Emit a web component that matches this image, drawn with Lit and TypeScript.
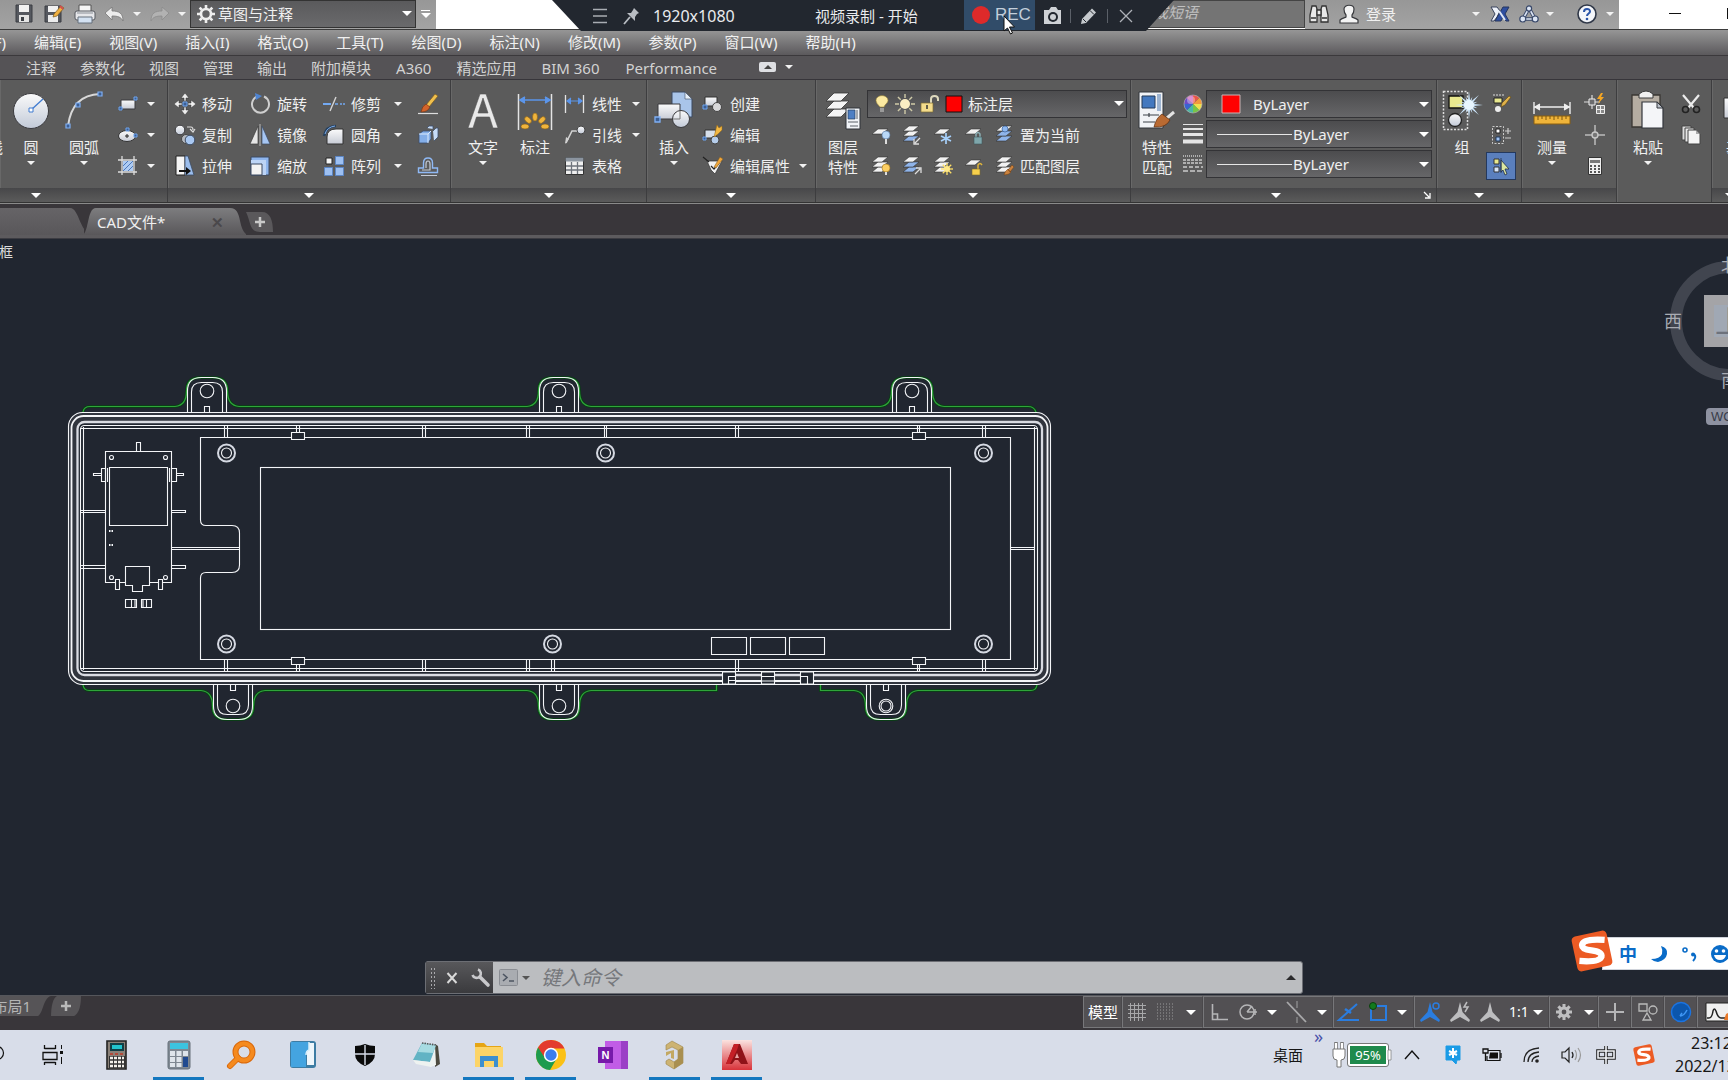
import { LitElement, html, svg, css, TemplateResult } from "lit";
import { customElement } from "lit/decorators.js";
import { classMap } from "lit/directives/class-map.js";

const ic = (w: number, h: number, body: unknown): TemplateResult =>
  html`<svg class="ic" width=${w} height=${h} viewBox="0 0 ${w} ${h}" aria-hidden="true">${body}</svg>`;

const caret = html`<span class="caret"></span>`;

/* Shared shapes */
const sheet = (x: number, y: number, fill = "#f2f2f2") =>
  svg`<path d="M${x + 6} ${y}h10l-6 5h-10z" fill=${fill} stroke="#333" stroke-width=".6"/>`;
const stack = (blue: number) =>
  svg`${[2, 1, 0].map((i) => sheet(1, 1 + i * 5, i >= 3 - blue ? "#8fb4ea" : "#f2f2f2"))}`;

/* Title bar icons */
const I = {
  save: ic(20, 20, svg`<path d="M2 1h16v17H2z" fill="#55585f" stroke="#3b3d42"/><path d="M5 1h10v7H5z" fill="#f1f1f1"/><path d="M5 11h10v7H5z" fill="#e4e4e4"/><path d="M7 13h3v4H7z" fill="#3d4046"/>`),
  saveAs: ic(20, 20, svg`<path d="M1 2h16v16H1z" fill="#55585f" stroke="#3b3d42"/><path d="M4 2h10v6H4z" fill="#f1f1f1"/><path d="M4 11h10v7H4z" fill="#ececec"/><path d="M9 13l1-3 7-8 3 2-7 8z" fill="#f0b040" stroke="#7a5a20" stroke-width=".7"/><path d="M16 2l3 3" stroke="#d05050" stroke-width="2"/>`),
  print: ic(22, 20, svg`<path d="M5 1h12v7H5z" fill="#f5f5f5" stroke="#555"/><rect x="1" y="7" width="20" height="9" rx="2" fill="#e6e7ea" stroke="#55585f"/><path d="M4 13h14v6H4z" fill="#d4e2f2" stroke="#66707c"/><path d="M3 9h16" stroke="#8b9097"/>`),
  undo: ic(20, 16, svg`<path d="M1 7l7-6v4c7 0 11 2 11 10-2-4-5-5-11-5v4z" fill="#ececec" stroke="#777" stroke-width=".8"/>`),
  redo: ic(20, 16, svg`<path d="M19 7l-7-6v4C5 5 1 7 1 15c2-4 5-5 11-5v4z" fill="#b2b2b2" stroke="#8b8b8b" stroke-width=".8"/>`),
  gear: ic(18, 18, svg`<circle cx="9" cy="9" r="5" fill="none" stroke="#eee" stroke-width="2.6"/><g stroke="#eee" stroke-width="2.6">${[0, 45, 90, 135].map((a) => svg`<path d="M9 0v3M9 15v3" transform="rotate(${a} 9 9)"/>`)}</g>`),
  binoculars: ic(20, 20, svg`<g fill="#e8e8e8" stroke="#333" stroke-width="1.3"><path d="M3 2h4l1 3v13H1v-7z"/><path d="M13 2h4l2 9v7h-7V5z"/><path d="M8 6h4v5H8z"/><path d="M2 14h5M13 14h5"/></g>`),
  user: ic(20, 20, svg`<path d="M1 19v-3c2-2 5-2 6-3v-2C5 9 5 7 5 5c0-5 10-5 10 0 0 2 0 4-2 6v2c1 1 4 1 6 3v3z" fill="#f3f3f3" stroke="#38393d" stroke-width="1.2"/>`),
  exchange: ic(20, 16, svg`<path d="M1 1h6l3 4-3 6-3 4H1l4-7z" fill="#eef2fa" stroke="#39435c"/><path d="M19 1h-6L5 15h6l2-4 3 4h3l-4-7z" fill="#2f4fa0" stroke="#26365f"/><path d="M9 5l6 9" stroke="#dfe7f6" stroke-width="2"/>`),
  a360: ic(20, 18, svg`<path d="M10 3L4 14h12z" fill="none" stroke="#38486a" stroke-width="3.600" stroke-linejoin="round"/><path d="M10 3L4 14h12z" fill="none" stroke="#dce5f4" stroke-width="1.600" stroke-linejoin="round"/><g fill="#dce5f4" stroke="#38486a" stroke-width="1.200"><circle cx="10" cy="3.500" r="2.600"/><circle cx="3.800" cy="14" r="3"/><circle cx="16.200" cy="14" r="3"/></g>`),
  help: ic(20, 20, svg`<circle cx="10" cy="10" r="9" fill="#f4f6fa" stroke="#303848" stroke-width="1.6"/><path d="M7 8c0-4 6-4 6-.5 0 2-3 2-3 4.500" fill="none" stroke="#2b55a8" stroke-width="2"/><circle cx="10" cy="15" r="1.300" fill="#2b55a8"/>`),
  burger: ic(14, 16, svg`<path d="M0 1.500h14M0 8h14M0 14.500h14" stroke="#a9adb3" stroke-width="1.500"/>`),
  pin: ic(16, 18, svg`<path d="M10 1l5 5-2 1-2 3 0 4-8-8 4 0 2-3z" fill="#b9bdc3"/><path d="M6 10l-6 7" stroke="#b9bdc3" stroke-width="1.800"/>`),
  camera: ic(20, 18, svg`<path d="M2 3h4l2-3h5l2 3h3v14H1V3z" fill="#cfd2d6"/><circle cx="10" cy="10" r="5" fill="#22272f"/><circle cx="10" cy="10" r="3" fill="#cfd2d6"/>`),
  pencil: ic(18, 18, svg`<path d="M1 17l1-5L12 1.500l4 4L6 16z" fill="#c6cace"/><path d="M10 3.500l4 4M3 12l3 3" stroke="#22272f"/>`),
  close: ic(14, 14, svg`<path d="M1 1l12 12M13 1L1 13" stroke="#aeb2b8" stroke-width="1.300"/>`),
  pointer: ic(12, 20, svg`<path d="M1 1v15l3.500-3 3 6 2-1-3-6h5z" fill="#fff" stroke="#111"/>`),

  /* Ribbon: draw */
  circle: ic(38, 38, svg`<circle cx="19" cy="19" r="17.500" fill="url(#ball)" stroke="#3a3a3e"/><path d="M19 18L31 7" stroke="#3f7bd0" stroke-width="1.300"/><path d="M17 16h4v4h-4z" fill="#fff" stroke="#3f7bd0"/>`),
  arc: ic(40, 42, svg`<path d="M4 36Q8 5 36 4" fill="none" stroke="#d8d8d8" stroke-width="2"/><g fill="#3d5f93" stroke="#7fb0f5" stroke-width="1.200"><path d="M2 34h4v4H2zM12 13h4v4h-4zM34 2h4v4h-4z"/></g>`),
  rect: ic(20, 16, svg`<path d="M3 4h14v9H3z" fill="url(#plate)" stroke="#3a3a3e"/><path d="M1 11h3v3H1zM16 1h3v3h-3z" fill="#3d5f93" stroke="#6fa5ef"/>`),
  ellipse: ic(20, 16, svg`<ellipse cx="9" cy="9" rx="8.500" ry="5.500" fill="url(#plate)" stroke="#333"/><path d="M9 7v4M7 9h4" stroke="#222"/><path d="M8 1h3v3H8zM16 7h3v3h-3z" fill="#3d5f93" stroke="#6fa5ef"/>`),
  hatch: ic(20, 20, svg`<path d="M5 5h10v10H5z" fill="#aecbf2"/><path d="M5 10l5-5M5 15L15 5M10 15l5-5" stroke="#4b78bb"/><path d="M4 0v19M0 4h19M16 0v19M0 16h19" stroke="#dedede" stroke-width="1.300"/>`),
  /* Ribbon: modify */
  move: ic(22, 22, svg`<path d="M11 0l4 5h-3v3h-2V5H7zM11 22l4-5h-3v-3h-2v3H7zM0 11l5-4v3h3v2H5v3zM22 11l-5-4v3h-3v2h3v3z" fill="#eee" stroke="#333" stroke-width=".5"/><path d="M9 9h4v4H9z" fill="#3d5f93" stroke="#6fa5ef"/>`),
  copy: ic(22, 22, svg`<circle cx="6" cy="6" r="4.800" fill="url(#ball)" stroke="#3a3a3e"/><circle cx="12" cy="15" r="4.500" fill="#b5b9c0" stroke="#444"/><circle cx="16" cy="16" r="4.800" fill="#a9c8f2" stroke="#3c4b63"/><path d="M13 3h4q2 0 2 3M16 5l3 3 2-3" fill="none" stroke="#ddd" stroke-width="1.200"/>`),
  stretch: ic(22, 22, svg`<path d="M2 1h9v19H2z" fill="#f5f5f5" stroke="#222"/><path d="M11 1h3l6 19h-9z" fill="#9bbdec" stroke="#3a4a62" stroke-width=".8"/><path d="M5 15h7v-3l5 4-5 4v-3H5z" fill="#111"/>`),
  rotate: ic(22, 22, svg`<path d="M15 3.500a8.500 8.500 0 1 1-7 0" fill="none" stroke="#cfcfcf" stroke-width="2"/><path d="M6 0l7 3-6 4z" fill="#4f85d3"/>`),
  mirror: ic(22, 22, svg`<path d="M9 2v18H1z" fill="#e6e6e6" stroke="#3c3c3c" stroke-width=".7"/><path d="M13 2v18h8z" fill="#a6c6f3" stroke="#3c4b63" stroke-width=".7"/><path d="M11 0v22" stroke="#bbb"/>`),
  scale: ic(22, 22, svg`<path d="M2 2h18v18H2z" fill="#8fb6ee" stroke="#3c4b63"/><path d="M2 5h15v15H2z" fill="#bcd4f6"/><path d="M2 9h11v11H2z" fill="#f3f3f3" stroke="#3c4b63"/>`),
  trim: ic(22, 20, svg`<path d="M0 10h8" stroke="#73a9f2" stroke-width="2"/><path d="M7 17l6-14" stroke="#d6d6d6" stroke-width="1.400"/><path d="M12 10h3m2 0h2m1 0h2" stroke="#73a9f2" stroke-width="1.500"/>`),
  fillet: ic(22, 22, svg`<path d="M4 20V13q0-8 9-8h7v15z" fill="url(#plate)" stroke="#333"/><path d="M1 12Q3 2 13 2" fill="none" stroke="#27415f" stroke-width="2.500"/><path d="M2 10Q4 3 12 2" fill="none" stroke="#80aeea" stroke-width="1"/>`),
  array: ic(22, 22, svg`<path d="M3 3h6v6H3z" fill="#f5f5f5" stroke="#222"/><g fill="#9dc0f2" stroke="#5c86c4"><path d="M12.500 1.500h8v8h-8zM1.500 12.500h8v8h-8zM12.500 12.500h8v8h-8z"/></g>`),
  brush: ic(22, 22, svg`<path d="M18 1l3 2-9 11-3-2z" fill="#f1c04d" stroke="#7b5b20" stroke-width=".7"/><path d="M9 11l4 3q-2 5-9 5 1-6 5-8z" fill="#d3632a" stroke="#6f3110" stroke-width=".6"/><path d="M1 20.500h20" stroke="#ddd" stroke-width="1.200"/>`),
  explode: ic(22, 22, svg`<path d="M2 10l4-3h8v8l-3 4H2z" fill="#84aee8" stroke="#3b4d69" stroke-width=".8"/><path d="M2 10h9v9M11 10l3-3" fill="none" stroke="#dceafc"/><path d="M10 4l2-2h4v3M16 7l3-3h2v9l-4 4" fill="#c5dbf7" stroke="#3b4d69" stroke-width=".8"/>`),
  offset: ic(22, 22, svg`<path d="M1.500 17.500h19V13h-5V8q0-5-4.500-5T6.500 8v5h-5z" fill="none" stroke="#8fb9f5" stroke-width="1.400"/><path d="M4 20.500h16M9 13V9q0-3 2-3t2 3v6H5" fill="none" stroke="#c4cbd6" stroke-width="1.200"/>`),
  /* Ribbon: annotate */
  letterA: ic(34, 38, svg`<path d="M2 36L14 2h6l12 34h-5l-3.500-11h-13L7 36zM12 21h10L17 6z" fill="#e9e9e9" stroke="#555" stroke-width=".6"/>`),
  dimension: ic(38, 40, svg`<path d="M2.500 3v36M35.500 3v36" stroke="#e4e4e4" stroke-width="1.500"/><path d="M4 9h30M9 6L4 9l5 3M29 6l5 3-5 3" fill="#5b95ea" stroke="#5b95ea" stroke-width="1.600"/><g fill="#f0b43c" stroke="#8a6116" stroke-width=".6"><ellipse cx="19" cy="26" rx="2.500" ry="4"/><ellipse cx="12" cy="29" rx="2.500" ry="4" transform="rotate(-45 12 29)"/><ellipse cx="26" cy="29" rx="2.500" ry="4" transform="rotate(45 26 29)"/><ellipse cx="9" cy="35.500" rx="4" ry="2.500"/><ellipse cx="29" cy="35.500" rx="4" ry="2.500"/></g>`),
  linear: ic(22, 20, svg`<path d="M1.500 1v18M19.500 1v18" stroke="#e4e4e4" stroke-width="1.300"/><path d="M3 7h15M7 4L3 7l4 3M14 4l4 3-4 3" fill="#5b95ea" stroke="#5b95ea" stroke-width="1.200"/>`),
  leader: ic(22, 20, svg`<path d="M2 18L8 6h7" fill="none" stroke="#d2d2d2" stroke-width="1.600"/><path d="M1 19l1-7 3 2z" fill="#d2d2d2"/><circle cx="17" cy="5" r="4" fill="url(#ball)" stroke="#444"/>`),
  table: ic(22, 20, svg`<path d="M1.500 1.500h18v17h-18z" fill="#efefef" stroke="#333"/><path d="M1.500 1.500h18v4h-18z" fill="#8b949f"/><path d="M2 10h17M2 14h17M7.500 6v12M13.500 6v12" stroke="#6d737b" stroke-width="1.300"/>`),
  /* Ribbon: block */
  insert: ic(40, 40, svg`<path d="M18 1h13l7 7v18H18z" fill="#a9c5ea" stroke="#3c4b63"/><path d="M31 1v7h7z" fill="#e6effa" stroke="#3c4b63" stroke-width=".6"/><path d="M4 13h22v15H4z" fill="url(#plate)" stroke="#3a3a3e"/><circle cx="27" cy="28" r="8.500" fill="url(#ball)" stroke="#3a3a3e"/><path d="M26 20v8h-7" fill="none" stroke="#777"/><path d="M1 26h5v5H1z" fill="#3d5f93" stroke="#7fb0f5" stroke-width="1.300"/>`),
  create: ic(22, 20, svg`<path d="M3 3h12v9H3z" fill="url(#plate)" stroke="#333"/><circle cx="15" cy="13" r="4.500" fill="#d8d8da" stroke="#444"/><path d="M1 11h4v4H1z" fill="#3d5f93" stroke="#6fa5ef"/>`),
  blockEdit: ic(22, 22, svg`<path d="M3 6h11v8H3z" fill="#d6dfea" stroke="#333"/><circle cx="13" cy="16" r="4" fill="#b5cdeb" stroke="#444"/><path d="M1 13h3v3H1z" fill="#3d5f93" stroke="#6fa5ef"/><path d="M14 5l1-4 2 3 3-2v4l-4 4-4 3z" fill="#f3b944" stroke="#9b6b12" stroke-width=".5"/>`),
  attr: ic(22, 20, svg`<path d="M5 5h15l-7 13-4-4z" fill="#f2f2f2" stroke="#333" stroke-width=".7"/><path d="M1 1l6 5M9 10l3 3 5-6" fill="none" stroke="#222" stroke-width="1.200"/><path d="M18 1l3 2-7 9-2-1z" fill="#f0a53a" stroke="#7b5b20" stroke-width=".5"/>`),
  /* Ribbon: layers */
  layerProps: ic(38, 40, svg`${[18, 10, 2].map((y) => svg`<path d="M10 ${y}h15l-8 8H2z" fill="#f4f4f4" stroke="#333" stroke-width=".8"/>`)}<path d="M22 17h14v21H22z" fill="#f1f4f8" stroke="#2f3339"/><path d="M24 19h7v9h-7z" fill="#4d7fc4" stroke="#27415f" stroke-width=".7"/><path d="M33 19v9M24 31h10M26 35h8" stroke="#5a6068"/>`),
  bulb: ic(16, 20, svg`<path d="M6 13Q2 9 2 6.500C2 0 14 0 14 6.500 14 9 11 10 10 13z" fill="#fbe9a1" stroke="#a08a3c" stroke-width=".6"/><path d="M6 14h4v4H6z" fill="#9a9a9a"/>`),
  sun: ic(20, 20, svg`<g stroke="#cfcaa8" stroke-width="1.400">${[0, 45, 90, 135].map((a) => svg`<path d="M10 0v4M10 16v4" transform="rotate(${a} 10 10)"/>`)}</g><circle cx="10" cy="10" r="5" fill="#fbeec4"/>`),
  unlock: ic(20, 18, svg`<path d="M11 8V4q0-3 3.500-3T18 4v2" fill="none" stroke="#ded9bd" stroke-width="2"/><path d="M1 8h12v9H1z" fill="#f4dc8c" stroke="#7b6a31" stroke-width=".7"/><path d="M7 10v4" stroke="#333" stroke-width="1.500"/>`),
  red: ic(18, 18, svg`<path d="M1 1h16v16H1z" fill="#f00" stroke="#111"/>`),
  l1: ic(20, 20, svg`${sheet(1, 4)}<circle cx="15" cy="10" r="4" fill="#b9d8f7" stroke="#5b7ba5" stroke-width=".6"/><path d="M15 14v5" stroke="#ddd" stroke-width="2"/>`),
  l2: ic(20, 20, svg`${stack(1)}<path d="M18 13l-5 5M12 14v5h5" fill="none" stroke="#ddd" stroke-width="1.300"/>`),
  l3: ic(20, 20, svg`${sheet(1, 4)}<path d="M13 8v11M8 11l10 5M18 11L8 16" stroke="#a6d0fb" stroke-width="1.700"/>`),
  l4: ic(20, 20, svg`${sheet(1, 4)}<path d="M12 12V9q2-3 4 0v3" fill="none" stroke="#8fb3b8" stroke-width="1.400"/><path d="M10 12h8v7h-8z" fill="#7ea6ab" stroke="#41575a" stroke-width=".6"/>`),
  l5: ic(20, 20, svg`${stack(2)}<circle cx="10" cy="4" r="3" fill="#8fb9f2" stroke="#365d96" stroke-width=".7"/>`),
  l6: ic(20, 20, svg`${stack(0)}<circle cx="15" cy="12" r="4" fill="#fccf63" stroke="#a1751c" stroke-width=".6"/><path d="M15 16v3" stroke="#ddd" stroke-width="2"/>`),
  l7: ic(20, 20, svg`${stack(2)}<path d="M13 18l5-5M14 12h5v5" fill="none" stroke="#ddd" stroke-width="1.300"/>`),
  l8: ic(20, 20, svg`${stack(0)}<g stroke="#ffe066" stroke-width="1.300">${[0, 45, 90, 135].map((a) => svg`<path d="M14 7v12" transform="rotate(${a} 14 13)"/>`)}</g><circle cx="14" cy="13" r="3" fill="#ffe98a"/>`),
  l9: ic(20, 20, svg`${sheet(1, 4)}<path d="M14 13V9q2-3 4 0" fill="none" stroke="#e0b53a" stroke-width="1.500"/><path d="M8 13h8v6H8z" fill="#f6cf4c" stroke="#7b6a31" stroke-width=".6"/>`),
  l10: ic(20, 20, svg`${stack(0)}<path d="M17 9l2 2-4 5-2-2zM13 13l3 3q-2 3-7 3 1-4 4-6z" fill="#c9823f" stroke="#6f3c10" stroke-width=".5"/>`),
  /* Ribbon: properties */
  match: ic(40, 40, svg`<path d="M2 1h24v36H2z" fill="#f1f3f6" stroke="#33373c"/><path d="M5 5h13v12H5z" fill="#4378bf" stroke="#243a58"/><path d="M20 3h4v17h-4z" fill="#9db4d1"/><path d="M6 24h16M6 31h12M12 22v4" stroke="#3d4248" stroke-width="1.200"/><path d="M37 21l-7 6" stroke="#e3e3e3" stroke-width="3"/><path d="M25 23l8 6q-4 8-16 7 2-9 8-13z" fill="#b96a32" stroke="#5c2d0e" stroke-width=".7"/>`),
  wheel: ic(20, 20, svg`${["#e8564a", "#f39a3d", "#efe04e", "#77c648", "#4cb7a5", "#3a63d0", "#6d4bc7", "#c857b6"].map((c, i) => svg`<path d="M10 10V1A9 9 0 0 1 16.400 3.600z" fill=${c} transform="rotate(${i * 45} 10 10)"/>`)}<circle cx="10" cy="10" r="9" fill="none" stroke="#bbb" stroke-width=".6"/><circle cx="8" cy="6" r="4" fill="#fff" opacity=".35"/>`),
  weights: ic(20, 20, svg`<path d="M0 .500h20" stroke="#e4e4e4"/><path d="M0 5h20" stroke="#e4e4e4" stroke-width="2"/><path d="M0 10.500h20" stroke="#e4e4e4" stroke-width="3"/><path d="M0 17.500h20" stroke="#e4e4e4" stroke-width="4"/>`),
  types: ic(20, 20, svg`<g stroke="#ccc" stroke-width="1.300"><path d="M0 2h20" stroke-dasharray="1 1"/><path d="M0 6h20M0 9h20" stroke-dasharray="3 1"/><path d="M0 13h20" stroke-dasharray="4 2"/><path d="M0 17h20" stroke-dasharray="5 2"/></g>`),
  redFrame: ic(20, 20, svg`<path d="M1 1h18v18H1z" fill="#f00" stroke="#c9b4b4"/>`),
  /* Ribbon: group, utilities, clipboard */
  group: ic(40, 42, svg`<path d="M1.500 1.500h24v38h-24z" fill="none" stroke="#ddd" stroke-width="1.500" stroke-dasharray="2 1.500"/><path d="M7 6h14v12H7z" fill="#e9e98f" stroke="#111" stroke-width="1.300"/><circle cx="13" cy="30" r="6.500" fill="url(#ball)" stroke="#222" stroke-width="1.300"/><g fill="#cfe9ff">${[0, 22, 45, 68, 90, 112, 135, 158].map((a, i) => svg`<path d="M27 ${i % 2 ? 6 : 1}l1.500 ${i % 2 ? 9 : 14}l-1.500 ${i % 2 ? 9 : 14}l-1.500 ${i % 2 ? -9 : -14}z" transform="rotate(${a} 27 15)"/>`)}</g><circle cx="27" cy="15" r="5" fill="#e8f6ff"/>`),
  groupEdit: ic(22, 22, svg`<path d="M3 2h12" stroke="#ddd" stroke-dasharray="2 1"/><path d="M4 5h8v5H4z" fill="#e9e98f" stroke="#222"/><circle cx="8" cy="16" r="3" fill="#eee"/><path d="M19 3l2 1-6 8-4 2 1-4z" fill="#e0b24a" stroke="#5b4512" stroke-width=".6"/>`),
  groupPm: ic(22, 22, svg`<path d="M2.500 2.500h11v17h-11z" fill="none" stroke="#ccc" stroke-dasharray="2 1.500"/><path d="M6 5h4v4H6z" fill="#fff" stroke="#222"/><path d="M6 13h4v4H6z" fill="#9fc1f0" stroke="#223a5c"/><path d="M15 7h6M18 4v6M15 14h6" stroke="#ccc" stroke-width="1.200"/>`),
  groupSel: ic(22, 22, svg`<path d="M4 4h5v5H4z" fill="#e9e98f" stroke="#333"/><path d="M4 12h5v5H4z" fill="#d7e6fb" stroke="#333"/><path d="M11 3v15M11 5l8 9h-4l2 5-2 1-2-5-2 2z" fill="#dbe6a0" stroke="#22304a" stroke-width=".8"/>`),
  measure: ic(40, 30, svg`<path d="M2 6v12M38 6v12M3 11h34M8 8l-5 3 5 3M32 8l5 3-5 3" fill="#eee" stroke="#eee" stroke-width="1.400"/><path d="M2 20h36v8H2z" fill="#efb43a" stroke="#8a5f11"/><path d="M6 20v4M10 20v3M14 20v4M18 20v3M22 20v4M26 20v3M30 20v4M34 20v3" stroke="#7c560f"/>`),
  quickSel: ic(22, 22, svg`<path d="M0 9h16M8 2v14" stroke="#ddd" stroke-width="1.200"/><path d="M5 6h6v6H5z" fill="#6c6c6e" stroke="#eee"/><path d="M17 0l-4 6h3l-2 5 6-7h-3l2-4z" fill="#f5a623"/><path d="M12.500 12.500h8v8h-8zM12 16.500h8M16.500 12v8" fill="#888" stroke="#eee"/>`),
  cross: ic(20, 20, svg`<path d="M0 10h20M10 0v20" stroke="#bcbcbc" stroke-width="1.500"/><circle cx="10" cy="10" r="3" fill="#777" stroke="#c8c8c8" stroke-width="1.400"/>`),
  calcSm: ic(16, 20, svg`<path d="M1.500 1.500h13v17h-13z" fill="#eee" stroke="#333"/><path d="M3 4h10v3H3z" fill="#777"/><path d="M3 10h10M3 13h10M3 16h10" stroke="#555" stroke-width="2" stroke-dasharray="2 2"/>`),
  paste: ic(36, 42, svg`<path d="M2 5h28v32H2z" fill="#b5ada2" stroke="#3a3733" stroke-width="1.300"/><path d="M9 8V4q7-6 14 0v4z" fill="#f0f0f0" stroke="#3b3b3b"/><path d="M12 12h15l6 6v20H12z" fill="#f4f5f8" stroke="#33363c" stroke-width="1.200"/><path d="M27 12v6h6z" fill="#bcc1ca" stroke="#33363c"/>`),
  cut: ic(20, 20, svg`<path d="M2 1l11 13M18 1L7 14" stroke="#ececec" stroke-width="2.200"/><circle cx="4.500" cy="15.500" r="3" fill="none" stroke="#222" stroke-width="1.600"/><circle cx="15.500" cy="15.500" r="3" fill="none" stroke="#222" stroke-width="1.600"/>`),
  copyDoc: ic(20, 22, svg`<path d="M1 2h9v14H1z" fill="#ddd" stroke="#444"/><path d="M4 4h9v14H4z" fill="#e8e8e8" stroke="#444"/><path d="M7 6h8l4 4v10H7z" fill="#f5f5f5" stroke="#444"/><path d="M15 6v4h4z" fill="#aaa"/>`),
  base: ic(36, 30, svg`<path d="M1 2h30v20H1z" fill="url(#plate)" stroke="#333"/>`),
  corner: ic(8, 8, svg`<path d="M1 1l5 5M7 2v5H2" fill="none" stroke="#fff" stroke-width="1.300"/>`),
  /* Command line */
  xBold: ic(12, 12, svg`<path d="M1.500 1l9 10M10.500 1l-9 10" stroke="#d9d9d9" stroke-width="2"/>`),
  wrench: ic(20, 20, svg`<path d="M9 9l8 8" stroke="#c9c9cc" stroke-width="3.600" stroke-linecap="round"/><path d="M7 1.500A4.300 4.300 0 1 1 1.500 7" fill="none" stroke="#c9c9cc" stroke-width="2.600"/>`),
  prompt: ic(20, 18, svg`<rect x=".500" y=".500" width="18" height="16" rx="1" fill="#a9acb1" stroke="#8a8d93"/><path d="M4 5l4 3.500L4 12M10 12h5" fill="none" stroke="#4d5562" stroke-width="1.600"/>`),
  /* Status bar */
  grid: ic(18, 18, svg`<path d="M2.500 0v18M6.500 0v18M10.500 0v18M14.500 0v18M0 2.500h18M0 6.500h18M0 10.500h18M0 14.500h18" stroke="#a8a8aa"/>`),
  dots: ic(18, 18, svg`<g stroke="#9a9a9c" stroke-width="1.200" stroke-dasharray="1 2"><path d="M0 1h18M0 4h18M0 7h18M0 10h18M0 13h18M0 16h18"/></g>`),
  ortho: ic(18, 18, svg`<path d="M1.500 1v15.500H17M1.500 11h5v5" fill="none" stroke="#b5b5b7" stroke-width="1.600"/>`),
  polar: ic(20, 18, svg`<circle cx="9" cy="9" r="7" fill="none" stroke="#b5b5b7" stroke-width="1.500"/><path d="M9 9h10M9 9l5-6M17 6v6" fill="none" stroke="#b5b5b7" stroke-width="1.500"/>`),
  iso: ic(22, 22, svg`<path d="M1 1l19 20" stroke="#a8a8aa" stroke-width="1.800"/><path d="M11 0v7M11 16v6" stroke="#8b8b8d" stroke-width="1.400"/>`),
  angle: ic(24, 20, svg`<path d="M20 2L2 18h20" fill="none" stroke="#2a7de0" stroke-width="2"/><path d="M8 7l6 4" stroke="#2a7de0" stroke-width="2.600"/>`),
  osnap: ic(20, 20, svg`<path d="M2 4h15v14H2z" fill="none" stroke="#2a7de0" stroke-width="2"/><circle cx="4" cy="4" r="3.500" fill="#127a1d" stroke="#0a3f0c"/>`),
  scaleA: (c: string, extra: unknown) => ic(22, 22, svg`<path d="M11 1l2.500 10 7.500 8-1 2-9-5-9 5-1-2 7.500-8z" fill=${c}/>${extra}`),
  gearS: ic(18, 18, svg`<g stroke="#bebec0" stroke-width="3">${[0, 45, 90, 135].map((a) => svg`<path d="M9 1v4M9 13v4" transform="rotate(${a} 9 9)"/>`)}</g><circle cx="9" cy="9" r="4" fill="none" stroke="#bebec0" stroke-width="3.200"/>`),
  plusS: ic(18, 18, svg`<path d="M9 0v18M0 9h18" stroke="#b5b5b7" stroke-width="2"/>`),
  shapes: ic(20, 20, svg`<path d="M1 2h8v7H1z" fill="none" stroke="#bbb" stroke-width="1.300"/><circle cx="15" cy="8" r="4" fill="none" stroke="#bbb" stroke-width="1.300"/><path d="M9 11l4 7H5z" fill="none" stroke="#bbb" stroke-width="1.300"/>`),
  hw: ic(22, 22, svg`<circle cx="11" cy="11" r="9.500" fill="#0c56ac" stroke="#1b73e0" stroke-width="1.500"/><path d="M10 15q4 0 7-6M10 15l2-3" fill="none" stroke="#3f97f5" stroke-width="1.500"/>`),
  graph: ic(24, 20, svg`<path d="M1 1h23v18H1z" fill="#f0f0f0" stroke="#222"/><path d="M2 16h2q3 0 4-7 1-4 3 0 2 7 5 7h6" fill="none" stroke="#222" stroke-width="1.500"/><path d="M19 18l2-6 4-2v8z" fill="#e8792a"/>`),
  /* Input method */
  sogou: (s: number) => html`<svg class="ic" width=${s} height=${s} viewBox="0 0 40 40" aria-hidden="true"><rect x="3" y="3" width="34" height="34" rx="4" fill="#ec5b24" transform="rotate(-12 20 20)"/><path d="M32 9.500Q11 8 10.500 14.500q0 4 9 5Q30 20.500 29 25.500 27 31 8 29.500" fill="none" stroke="#fff" stroke-width="6"/></svg>`,
  moon: ic(18, 18, svg`<path d="M11 1q7 2 6 8T8 17q-4 0-7-3 9 0 11-5 1-4-1-8z" fill="#0a6cc8"/>`),
  punct: ic(16, 16, svg`<circle cx="4" cy="4" r="2" fill="none" stroke="#0a6cc8" stroke-width="1.600"/><path d="M13 8q3 3-1 7" fill="none" stroke="#0a6cc8" stroke-width="2"/><circle cx="12" cy="8.500" r="2" fill="#0a6cc8"/>`),
  smile: ic(20, 20, svg`<circle cx="10" cy="10" r="9" fill="#0a6cc8"/><circle cx="6.500" cy="7" r="1.800" fill="#fff"/><circle cx="13.500" cy="7" r="1.800" fill="#fff"/><path d="M4 11h12q-1 5-6 5t-6-5z" fill="#fff"/>`),
};

/* Windows taskbar icons */
const T = {
  view: ic(24, 22, svg`<path d="M1.500 1v4M12.500 1v4M1.500 4.500h11M0 8.500h14v7H0zM1.500 21v-3M12.500 21v-3M1.500 18.500h11" fill="none" stroke="#111" stroke-width="1.300"/><path d="M18.500 1v4M18.500 13v7" stroke="#111"/><path d="M17 7h3v3h-3z" fill="#111"/>`),
  calcA: ic(22, 30, svg`<path d="M1 1h19v28H1z" fill="#8a8178" stroke="#222" stroke-width="1.600"/><path d="M4 3h14v8H4z" fill="#113f46"/><path d="M6 5h10v4H6z" fill="#22c3cc"/><path d="M4 14h13" stroke="#b34a3a" stroke-width="2" stroke-dasharray="3 2"/><path d="M3 16h16v12H3z" fill="#333"/><path d="M4 18h14M4 22h14M4 26h14" stroke="#f3f0ea" stroke-width="2.500" stroke-dasharray="3 1"/>`),
  calcB: ic(24, 30, svg`<rect x="1" y="1" width="22" height="28" rx="2" fill="#7f8892" stroke="#66707a"/><path d="M3 3h18v6H3z" fill="#3cc3df"/><g fill="#dfe5eb"><path d="M3 11h5v5H3zM9.500 11h5v5h-5zM16 11h5v5h-5zM3 17h5v5H3zM9.500 17h5v5h-5zM3 23h5v4H3zM9.500 23h5v4h-5z"/></g><path d="M16 17h5v10h-5z" fill="#204a90"/>`),
  everything: ic(30, 30, svg`<path d="M4 26l8-8" stroke="#d9690c" stroke-width="6" stroke-linecap="round"/><circle cx="18" cy="12" r="8.500" fill="none" stroke="#d9690c" stroke-width="6"/><path d="M4 26l8-8" stroke="#f58a1f" stroke-width="4" stroke-linecap="round"/><circle cx="18" cy="12" r="8.500" fill="none" stroke="#f58a1f" stroke-width="4"/>`),
  book: ic(30, 30, svg`<rect x="2" y="1" width="26" height="27" rx="3" fill="#3d7ca3"/><path d="M19 3h7v22h-7z" fill="#eef6fb"/><path d="M3 2h18v8q-3 1-3 5v12H3z" fill="#44a4e0"/><path d="M21 2v8q-3 1-3 5" fill="none" stroke="#d8effb" stroke-width="1.500"/>`),
  shield: ic(24, 24, svg`<path d="M12 1q5 2 10 2v8q0 8-10 12Q2 19 2 11V3q5 0 10-2z" fill="#0a0a0a"/><path d="M12 2v20M2 11h20" stroke="#d8dde9" stroke-width="1.400"/>`),
  notepad: ic(30, 30, svg`<path d="M23 4l3 2 2 18-5 3z" fill="#4d4a3f"/><path d="M23 5l1 20-6 2 2-8z" fill="#f3f6f4"/><path d="M10 3l14 2-6 17L1 20z" fill="#62b3c4"/><path d="M10 3l14 2-3 8-15-1z" fill="#a7dbe2"/><path d="M1 20l17 2 5-11v13l-4 3-15-3z" fill="#eef2f0"/><path d="M10 3l14 2" stroke="#555" stroke-width="1.600" stroke-dasharray="1.500 1"/>`),
  explorer: ic(30, 28, svg`<path d="M1 2h9l3 3h14v5H1z" fill="#e6a514"/><path d="M1 6h28v20H1z" fill="#fcd467"/><path d="M6 15h18v11h-4v-6H10v6H6z" fill="#3d8fcf"/>`),
  chrome: ic(32, 32, svg`<circle cx="16" cy="16" r="15" fill="#fbc116"/><path d="M3 8.500a15 15 0 0 0 12 22.500l7-12z" fill="#1d9b4e"/><path d="M3 8.500A15 15 0 0 1 29.500 9.500H16L10 19z" fill="#e33b2e"/><circle cx="16" cy="16" r="7.200" fill="#fff"/><circle cx="16" cy="16" r="5.700" fill="#3b7ded"/>`),
  onenote: html`<span class="onenote"><span>N</span></span>`,
  altium: ic(24, 32, svg`<path d="M3 6l6-4 11 6v16l-9 6-8-5v-3l3-2 5 3 4-3V11L9 8 3 11z" fill="#cdb372" stroke="#9c8348" stroke-width=".6"/><path d="M3 13l8-2v9l-3-1v-5l-5 3z" fill="#c3a862"/><path d="M15 11l5-3v16l-9 6v-7l4-3z" fill="#a98f50"/>`),
  autocad: ic(32, 32, svg`<rect x="1" y="1" width="30" height="30" fill="url(#acad)"/><path d="M13 5h6l8 20h-7l-3-4h-3l-3 4H5z" fill="#8f1218"/><path d="M13 5h5l-2 6-7 14H5z" fill="#c41f26"/><path d="M16 14l2 5h-4z" fill="#e9a3a3"/>`),
};

interface App { icon: TemplateResult; name: string; on?: boolean; }
const APPS: App[] = [
  { icon: T.view, name: "任务视图" },
  { icon: T.calcA, name: "计算器" },
  { icon: T.calcB, name: "计算器", on: true },
  { icon: T.everything, name: "搜索" },
  { icon: T.book, name: "词典" },
  { icon: T.shield, name: "安全" },
  { icon: T.notepad, name: "记事本" },
  { icon: T.explorer, name: "文件资源管理器", on: true },
  { icon: T.chrome, name: "Chrome", on: true },
  { icon: T.onenote, name: "OneNote" },
  { icon: T.altium, name: "Altium", on: true },
  { icon: T.autocad, name: "AutoCAD", on: true },
];

const MENUS = ["编辑(E)", "视图(V)", "插入(I)", "格式(O)", "工具(T)", "绘图(D)", "标注(N)", "修改(M)", "参数(P)", "窗口(W)", "帮助(H)"];
const TABS = ["注释", "参数化", "视图", "管理", "输出", "附加模块", "A360", "精选应用", "BIM 360", "Performance"];

/* Mounting lugs: centre x and whether the lug points upwards */
const LUGS: Array<[number, boolean]> = [[207, true], [559, true], [912, true], [233, false], [559, false], [886, false]];

const lug = ([c, up]: [number, boolean]) => {
  const f = up ? "" : "translate(0 1097) scale(1 -1)";
  return svg`<g transform=${f}>
    <path d="M${c - 19.5} 412V391q0-13.500 14-13.500h11q14 0 14 13.500v21" />
    <path d="M${c - 15.5} 412V392q0-9.500 10-9.500h11q10 0 10 9.500v20" />
    <circle cx=${c} cy="391" r="6.800" />
    <path d="M${c - 2.5} 412v-5.500h5v5.500" />
  </g>`;
};

const greenLug = (c: number, up: boolean) =>
  up
    ? `H${c - 32}q11.500 -1 11.500 -15.500q0 -13.500 14 -13.500h13q14 0 14 13.500q0 14.500 11.500 15.500`
    : `H${c - 32}q11.500 1 11.500 15.500q0 13.500 14 13.500h13q14 0 14 -13.500q0 -14.500 11.500 -15.500`;

const rib = (x: number, y: number, w = 3, h = 12) => `M${x} ${y}v${h}M${x + w} ${y}v${h}`;

const screw = (x: number, y: number) =>
  svg`<circle cx=${x} cy=${y} r="8.500" stroke-width="2" stroke="#d5d9e2"/><circle cx=${x} cy=${y} r="5"/>`;

const drawing = html`<svg class="drawing" width="1100" height="520" viewBox="0 239 1100 520" role="img" aria-label="外壳图纸">
  <g fill="none" stroke="#0b3d17" stroke-width="3">
    <path d="M83 412q1 -5.500 7 -5.500${greenLug(207, true)}${greenLug(559, true)}${greenLug(912, true)}H1028q6 0 8 5.500"/>
    <path d="M83 685q1 5.500 6 5.500${greenLug(233, false)}${greenLug(559, false)}H716.500v-6M820.500 684.500v6${greenLug(886, false)}H1031q5 0 6 -5.500"/>
  </g>
  <g fill="none" stroke="#2fa53a" stroke-width="1.200">
    <path d="M83 412q1 -5.500 7 -5.500${greenLug(207, true)}${greenLug(559, true)}${greenLug(912, true)}H1028q6 0 8 5.500"/>
    <path d="M83 685q1 5.500 6 5.500${greenLug(233, false)}${greenLug(559, false)}H716.500v-6M820.500 684.500v6${greenLug(886, false)}H1031q5 0 6 -5.500"/>
  </g>
  <rect x="72.500" y="416.500" width="973" height="263" rx="11" fill="none" stroke="#31353e" stroke-width="9"/>
  <g fill="none" stroke="#f4f5f8" stroke-width="1.100">
    ${LUGS.map(lug)}
    <circle cx="886" cy="706" r="5"/>
    <rect x="68.500" y="412.500" width="982" height="272" rx="14"/>
    <rect x="71.500" y="416" width="976" height="265" rx="12" stroke-width="1.800"/>
    <rect x="77.500" y="422" width="964.500" height="253" rx="7" stroke="#d9dbe2" stroke-width="2.300"/>
    <rect x="80.500" y="425.500" width="957" height="246" rx="4"/>
    <path d="M80 428.500H1038M80 668.500H1038M83.500 427V670M1034.500 427V670"/>
    <path d="M200.500 437.500H1010.500V659.500H200.500V578q0-5.500 5.500-5.500h26q7.500 0 7.500-7.500V533q0-7.500-7.500-7.500h-26q-5.500 0-5.500-5.500z"/>
    <rect x="260.500" y="467.500" width="690" height="162"/>
    ${[[226.500, 453], [605.500, 453], [983.500, 453], [226.500, 644], [552.500, 644], [983.500, 644]].map(([x, y]) => screw(x, y))}
    <path d="${[224.5, 422.5, 526.5, 735.5, 982.5].map((x) => rib(x, 425) + rib(x, 659)).join("")}${rib(604.5, 425, 2)}${rib(551.5, 659)}"/>
    <path d="${rib(296.5, 425, 3, 7)}${rib(917.5, 425, 2, 7)}${rib(296.5, 664, 3, 7)}${rib(917.5, 664, 2, 7)}"/>
    <path d="M291.500 432.500h13v7h-13zM912.500 432.500h13v7h-13zM291.500 657.500h13v7h-13zM912.500 657.500h13v7h-13z" fill="#212630"/>
    <path d="M1010 547.500h24M1010 549.500h24M172 547.500h67M172 549.500h67M81 510.500h24M81 512.500h24M81 565.500h24M81 568.500h24M172 510.500h13.500v2H172M172 565.500h13.500v3H172"/>
    <path d="M125 582.500H105.500V451.500H171.500V582.500H150M109.500 467.500h58v58h-58z"/>
    <circle cx="111.500" cy="457.500" r="2"/><circle cx="165.500" cy="457.500" r="2"/><circle cx="111.500" cy="577.500" r="2"/><circle cx="165.500" cy="577.500" r="2"/>
    <path d="M136.500 451v-8.500h4V451M101.500 468.500h4v13h-4zM107.500 468v14M93.500 473.500h8v2h-8zM171.500 468.500h5v13h-5zM169.500 468v14M176.500 473.500h7v2h-7z"/>
    <path d="M109 531h4M109 545h4" stroke-width="2" stroke-dasharray="1.500 1"/>
    <path d="M115.500 579.500h4v10h-4zM158.500 579.500h4v10h-4zM125.500 566.500h24v19h-7v6h-10v-6h-7z" fill="#212630"/>
    <path d="M125.500 599.500h11v8h-11zM131.500 599v8M135 599v8M141.500 599.500h10v8h-10zM143 599v8M146.500 599v8"/>
    <path d="M711.500 637.500h35v17h-35zM750.500 637.500h35v17h-35zM789.500 637.500h35v17h-35z"/>
    <path d="M722.500 672h13v12h-13zM761.500 672h13v12h-13zM800.500 672h13v12h-13z" fill="#212630"/>
    <path d="M728.500 684v-7.500h7M728.500 680.500h7M807.500 684v-7.500h-7M762 676.500h12M762 681h12"/>
  </g>
</svg>`;

@customElement("app-root")
export class AppRoot extends LitElement {
  static styles = css`
    :host { display: block; font-family: "Noto Sans", "Noto Sans CJK SC", sans-serif; font-size: 15px; line-height: 20px; color: #f0f0f0; }
    * { box-sizing: border-box; }
    button, select, input { font: inherit; color: inherit; border: 0; margin: 0; padding: 0; background: none; border-radius: 0; outline: none; }
    button { display: flex; align-items: center; white-space: nowrap; }
    select { appearance: none; cursor: pointer; }
    option { color: #222; }
    .ic { display: block; flex: none; overflow: visible; }
    .defs { position: absolute; width: 0; height: 0; }
    .caret { flex: none; width: 0; height: 0; border: 4px solid transparent; border-top: 4px solid #f2f2f2; border-bottom: 0; }
    .caret.big { border-width: 5px 5px 0; border-top-color: #fff; }
    .app { position: relative; display: flex; flex-direction: column; min-height: 100vh; overflow: hidden; background: #212630; }

    /* Title bar */
    .title { display: flex; height: 29px; background: #fff; }
    .quick { display: flex; align-items: center; width: 436px; padding: 0 0 2px 14px; background: linear-gradient(#979797, #a3a3a3); }
    .quick > * { flex: none; }
    .quick .save { width: 30px; }
    .quick .save-as { width: 30px; }
    .quick .printer { width: 30px; }
    .quick .undo { width: 29px; }
    .quick .drop { width: 17px; }
    .quick .redo { width: 28px; }
    .workspace { display: flex; align-items: center; gap: 3px; width: 226px; height: 28px; margin-left: 4px; padding: 0 3px 0 6px; border: 1px solid #333; background: linear-gradient(#5a5a5c, #6a6a6c); }
    .workspace select { flex: 1; align-self: stretch; min-width: 0; }
    .more { flex-direction: column; gap: 2px; width: 19px; justify-content: center; }
    .more::before { content: ""; width: 9px; height: 1px; background: #fff; }
    .search { width: 260px; margin-left: auto; height: 28px; padding-left: 32px; background: #747474; border: 1px solid #444; font-style: italic; line-height: 20px; padding-bottom: 4px; }
    .search::placeholder { color: #c0c0c0; opacity: 1; }
    .info { display: flex; align-items: center; width: 314px; padding: 0 0 2px 4px; background: linear-gradient(#979797, #a3a3a3); }
    .info .find { width: 30px; }
    .info .login { flex: 1; gap: 7px; }
    .info .login .caret { margin: 0 10px 0 auto; }
    .info .exch { width: 29px; }
    .info .net { width: 58px; gap: 7px; }
    .info .help { width: 42px; gap: 9px; }
    .win { display: flex; width: 109px; padding: 0 0 2px 50px; }
    .win button::before { content: ""; width: 12px; height: 1px; background: #111; }
    .win .max { margin-left: 46px; width: 1px; height: 11px; align-self: center; background: #111; }

    /* Recorder overlay */
    .rec { position: absolute; left: 552px; top: 0; z-index: 3; display: flex; align-items: center; width: 622px; height: 31px; padding-left: 41px; background: #22272f; clip-path: polygon(0 0, 100% 0, calc(100% - 28px) 100%, 29px 100%); color: #e9ebee; }
    .rec > * { flex: none; }
    .rec .menu { width: 31px; }
    .rec .pin { width: 29px; }
    .rec .size { width: 162px; font-size: 16px; }
    .rec .name { width: 149px; }
    .rec .go { width: 71px; height: 30px; gap: 5px; padding-left: 8px; align-self: flex-start; background: #314c69; font: 17px/32px "Liberation Sans", Arial, sans-serif; color: #c3cfdb; }
    .rec .go::before { content: ""; width: 18px; height: 18px; border-radius: 50%; background: #de2a2a; }
    .rec .tool { justify-content: center; height: 14px; width: 35px; }
    .rec .line { border-left: 1px solid #5b6068; width: 37px; }
    .cursor { position: absolute; left: 1003px; top: 15px; z-index: 4; }

    /* Menu bar and ribbon tabs */
    .menubar { display: flex; gap: 28px; height: 27px; align-items: center; padding-bottom: 2px; border-top: 1px solid #3b3b3b; border-bottom: 1px solid #3b393c; background: linear-gradient(#969696, #5b595c); }
    .cut { display: flex; justify-content: flex-end; overflow: hidden; flex: none; }
    .menubar .cut { width: 6px; }
    .tabs { display: flex; gap: 24px; height: 24px; align-items: center; border-bottom: 1px solid #37353a; background: #555356; color: #d2d2d2; }
    .tabs .cut { width: 2px; }
    .tabs .latin { padding: 0 1px; }
    .tabs .toggle { margin-left: 17px; gap: 9px; padding-bottom: 1px; }
    .pill { display: grid; place-items: center; width: 17px; height: 10px; border-radius: 2px; background: #dedfe3; }
    .pill::before { content: ""; border: 4px solid transparent; border-top: 0; border-bottom: 4px solid #444; }

    /* Ribbon */
    .ribbon { display: flex; height: 123px; background: #5b5b5b; border-bottom: 1px solid #333; overflow: hidden; }
    .group { display: flex; flex-direction: column; flex: none; border-right: 1px solid #3d3d3f; box-shadow: inset 1px 0 #686868; }
    .body { display: flex; flex: 1; padding-top: 8px; }
    .foot { display: flex; justify-content: center; align-items: center; width: 100%; height: 14px; background: linear-gradient(#474749, #5b5b5b); position: relative; }
    .bigbtn { flex-direction: column; flex: none; }
    .bigbtn .pic { display: grid; place-items: center; height: 46px; margin-bottom: 3px; }
    .bigbtn .caret { margin-top: 4px; }
    .bigbtn span.two { display: block; white-space: normal; width: 30px; }
    .rows { display: grid; grid-auto-rows: 31px; align-content: start; flex: none; }
    .small { gap: 6px; text-align: left; }
    .rows .caret { align-self: center; }
    .g-draw { width: 168px; }
    .g-draw .cut { width: 3px; align-self: flex-start; margin-top: 49px; }
    .g-draw .b1 { width: 56px; }
    .g-draw .b2 { width: 50px; }
    .g-draw .rows { grid-template-columns: 29px 10px; margin-left: 9px; }
    .g-draw .foot { padding-right: 96px; }
    .g-mod { width: 283px; }
    .g-mod .rows { grid-template-columns: 75px 74px 71px 23px 22px; margin-left: 6px; }
    .g-ann { width: 196px; }
    .g-ann .b1 { width: 50px; margin-left: 7px; }
    .g-ann .b2 { width: 54px; }
    .g-ann .rows { grid-template-columns: 68px 10px; margin-left: 2px; }
    .g-blk { width: 169px; }
    .g-blk .b1 { width: 50px; margin-left: 2px; }
    .g-blk .rows { grid-template-columns: 97px 10px; margin-left: 3px; }
    .g-lay { width: 315px; }
    .g-lay .b1 { width: 46px; margin-left: 4px; }
    .lay { display: grid; grid-template-rows: 31px 31px 31px; width: 260px; margin-left: 1px; align-content: start; }
    .lay .line { display: flex; align-items: center; gap: 11px; padding-left: 4px; }
    .lay .line .small { gap: 5px; }
    .combo { display: flex; align-items: center; gap: 5px; height: 28px; padding: 0 2px 0 6px; border: 1px solid #333336; background: linear-gradient(#4c4c4e, #666668); align-self: center; }
    .combo select { flex: 1; min-width: 0; align-self: stretch; }
    .combo .rule { width: 75px; height: 1px; background: #e6e6e6; }
    .g-prop { width: 306px; }
    .g-prop .b1 { width: 46px; margin-left: 3px; }
    .g-prop .rows { grid-template-columns: 23px 226px; grid-auto-rows: 30px; margin-left: 3px; padding-top: 1px; align-items: center; }
    .g-prop .red { gap: 12px; padding-left: 14px; }
    .g-prop .ln { gap: 1px; padding-left: 10px; }
    .g-prop .foot { padding-right: 16px; }
    .g-prop .foot .ic { position: absolute; right: 5px; }
    .g-grp { width: 85px; }
    .g-grp .b1 { width: 48px; margin-left: 1px; }
    .g-grp .rows button, .g-util .rows button, .g-clip .rows button { justify-content: center; }
    .g-grp .rows { grid-template-columns: 30px; }
    .g-grp .sel { border: 1px solid #24395e; background: #5a7fbd; height: 28px; align-self: center; }
    .g-util { width: 95px; }
    .g-util .b1 { width: 46px; margin-left: 7px; }
    .g-util .rows { grid-template-columns: 40px; }
    .g-clip { width: 95px; }
    .g-clip .b1 { width: 46px; margin-left: 8px; }
    .g-clip .rows { grid-template-columns: 40px; }
    .g-base { width: 60px; flex: none; }
    .g-base .b1 { margin-left: 11px; }
    .g-base .foot { padding-right: 24px; }

    /* Document tabs */
    .docs { display: flex; height: 32px; padding-top: 4px; background: #39363a; border-top: 1px solid #8a8a8a; }
    .doc { display: flex; align-items: center; height: 27px; background: linear-gradient(#7d7d7f, #59575a); }
    .doc.prev { width: 84px; background: linear-gradient(#666467, #59575a); clip-path: path("M0 0h70c10 0 9 28 26 28H0z"); }
    .doc.cur { width: 166px; margin-left: -4px; padding: 0 22px 0 17px; justify-content: space-between; clip-path: path("M0 28C10 28 6 0 16 0h134c14 0 6 24 20 28z"); }
    .doc .x { color: #4a484b; font-weight: 700; }
    .doc.add { width: 28px; height: 20px; margin-top: 4px; justify-content: center; background: #5a585b; clip-path: path("M0 0h16c8 0 11 8 11 20H14C3 20 5 10 0 0z"); }
    .strip { height: 4px; background: #5d5b5e; border-bottom: 1px solid #3c3c42; }

    /* Canvas */
    .canvas { position: relative; flex: 1; min-height: 600px; overflow: hidden; background: #212630; }
    .drawing { position: absolute; left: 0; top: 0; }
    .viewname { width: 13px; margin-top: 3px; font-size: 14px; color: #dcdcdc; }
    .cube { position: absolute; left: 1660px; top: 10px; width: 140px; height: 200px; color: #a9acb3; font-size: 18px; }
    .cube svg { position: absolute; left: 0; top: 0; }
    .cube .face { position: absolute; left: 44px; top: 46px; width: 52px; height: 52px; border: 0; display: grid; place-items: center; background: #a4a4a7; }
    .cube .face span { display: block; padding: 0 1px; background: #a0a8b4; color: #6d727c; font-size: 30px; line-height: 32px; }
    .cube .w { position: absolute; left: 4px; top: 62px; }
    .cube .n { position: absolute; left: 61px; top: 6px; }
    .cube .s { position: absolute; left: 61px; top: 121px; }
    .cube .wcs { position: absolute; left: 46px; top: 159px; width: 60px; height: 17px; padding-left: 5px; border-radius: 4px; background: #8e92a1; color: #383c48; font: 13px/17px "Liberation Sans", sans-serif; }
    .cmd { position: absolute; left: 425px; bottom: 1px; display: flex; width: 878px; height: 33px; border: 1px solid #6c6e74; border-radius: 3px; background: #bbbdc0; }
    .cmd .grip { display: flex; align-items: center; width: 67px; padding-left: 4px; gap: 10px; background: linear-gradient(#58585b, #3a3a3d); }
    .cmd .grip > * { flex: none; }
    .cmd .grip .d { width: 6px; height: 22px; background: radial-gradient(circle, #a9a9ac 1px, transparent 1px) 0 0 / 3px 4px; }
    .cmd .wr { padding-left: 3px; }
    .cmd .ask { gap: 3px; padding: 0 11px 0 6px; }
    .cmd .ask .caret { border-top-color: #555; }
    .cmd input { flex: 1; min-width: 0; font-size: 20px; font-style: italic; color: #444; }
    .cmd input::placeholder { color: #75777b; opacity: 1; }
    .cmd .up { padding-right: 6px; }
    .cmd .up::before { content: ""; border: 5px solid transparent; border-top: 0; border-bottom: 5px solid #2a2a2c; }
    .ime { position: absolute; left: 1571px; bottom: 23px; display: flex; align-items: center; color: #0a6cc8; }
    .ime .bar { display: flex; align-items: center; gap: 13px; width: 170px; height: 33px; margin: 5px 0 0 -11px; padding-left: 16px; background: #fff; border: 1px solid #cfd3da; font-size: 18px; font-weight: 700; }
    .ime .logo { position: relative; z-index: 1; }

    /* Status bar */
    .status { display: flex; height: 35px; border-top: 1px solid #55565b; background: #39363a; }
    .layout { display: flex; align-items: center; height: 20px; }
    .layout.cur { width: 51px; background: #565457; color: #b5b5b5; clip-path: path("M0 0h51c-9 2-7 21-16 21H0z"); }
    .layout.cur .cut { width: 31px; }
    .layout.add { width: 30px; justify-content: center; background: #565457; clip-path: path("M6 0h24c0 12-3 21-11 21H0C0 10 2 2 6 0z"); }
    .modes { display: flex; margin-left: auto; height: 32px; color: #fff; overflow: hidden; width: 645px; }
    .cell { display: flex; align-items: center; flex: none; border: 1px solid #77777a; border-right-color: #4a484b; background: #525053; }
    .cell.model { width: 39px; padding-left: 4px; white-space: nowrap; }
    .c-grid { width: 81px; padding-left: 5px; gap: 11px; }
    .c-track { width: 130px; padding-left: 7px; gap: 9px; }
    .c-snap { width: 81px; padding-left: 3px; gap: 8px; }
    .c-scale { width: 135px; padding-left: 4px; gap: 8px; }
    .c-scale .ratio { gap: 4px; font-size: 14px; }
    .c-gear { width: 49px; padding-left: 5px; gap: 11px; }
    .c-one { width: 33px; justify-content: center; }
    .cell.c-last { width: 60px; padding-left: 7px; }

    /* Taskbar */
    .taskbar { display: flex; height: 50px; background: #d8dde9; color: #161616; }
    .taskbar > * { flex: none; }
    .taskbar .cortana { width: 24px; overflow: hidden; }
    .app-btn { position: relative; justify-content: center; width: 62px; height: 50px; }
    .app-btn.on::after { content: ""; position: absolute; left: 5px; right: 6px; bottom: 0; height: 3px; background: #1477bf; }
    .onenote { position: relative; display: flex; align-items: center; width: 30px; height: 28px; padding-right: 14px; background: linear-gradient(90deg, transparent 7px, #c15ce6 7px 23px, #9b3fc6 23px); }
    .onenote span { width: 15px; height: 16px; background: #7719aa; color: #fff; font: bold 11px/16px "Liberation Sans", sans-serif; text-align: center; }
    .tray { display: flex; align-items: center; margin-left: auto; width: 455px; overflow: hidden; }
    .tray > * { flex: none; }
    .desk { width: 41px; }
    .chev { width: 18px; align-self: flex-start; color: #4850a8; font-size: 18px; line-height: 12px; }
    .batt { display: flex; align-items: center; width: 72px; }
    .batt .lvl { width: 40px; height: 22px; margin-left: 2px; border: 2px solid #fff; outline: 1px solid #777; border-radius: 2px; background: #1f8a4c; color: #fff; font: 13px/18px "Noto Sans", sans-serif; text-align: center; }
    .t1 { width: 40px; } .t2 { width: 38px; } .t3 { width: 41px; } .t4 { width: 38px; } .t5 { width: 36px; } .t6 { width: 36px; } .t7 { width: 41px; }
    .clock { font-size: 16px; line-height: 23px; padding-left: 1px; }
    .clock .time { display: block; padding-left: 16px; }
  `;

  private big(icon: unknown, label: string, cls: string, drop = true) {
    return html`<button class="bigbtn ${cls}"><span class="pic">${icon}</span><span class=${classMap({ two: label.length > 2 })}>${label}</span>${drop ? caret : ""}</button>`;
  }
  private small(icon: unknown, label = "") {
    return html`<button class="small" aria-label=${label || "工具"}>${icon}${label ? html`<span>${label}</span>` : ""}</button>`;
  }
  private foot(extra: unknown = "") {
    return html`<button class="foot" aria-label="展开面板"><span class="caret big"></span>${extra}</button>`;
  }
  private drop() {
    return html`<button aria-label="更多">${caret}</button>`;
  }

  render() {
    return html`
      <svg class="defs" aria-hidden="true"><defs>
        <linearGradient id="ball" x1="0" y1="0" x2="0" y2="1"><stop offset="0" stop-color="#fafafa"/><stop offset="1" stop-color="#c2cad8"/></linearGradient>
        <linearGradient id="plate" x1="0" y1="0" x2="0" y2="1"><stop offset="0" stop-color="#fbfbfb"/><stop offset="1" stop-color="#c8ccd6"/></linearGradient>
        <linearGradient id="acad" x1="0" y1="0" x2="0" y2="1"><stop offset="0" stop-color="#fbe3e0"/><stop offset="1" stop-color="#d83239"/></linearGradient>
      </defs></svg>
      <div class="app">
        <header class="title">
          <div class="quick">
            <button class="save" aria-label="保存">${I.save}</button>
            <button class="save-as" aria-label="另存为">${I.saveAs}</button>
            <button class="printer" aria-label="打印">${I.print}</button>
            <button class="undo" aria-label="放弃">${I.undo}</button>
            <button class="drop" aria-label="更多">${caret}</button>
            <button class="redo" aria-label="重做">${I.redo}</button>
            <button aria-label="更多">${caret}</button>
            <label class="workspace">${I.gear}<select aria-label="工作空间"><option>草图与注释</option></select><span class="caret big"></span></label>
            <button class="more" aria-label="自定义"><span class="caret big"></span></button>
          </div>
          <input class="search" aria-label="搜索" placeholder="输入关键字或短语" />
          <div class="info">
            <button class="find" aria-label="查找">${I.binoculars}</button>
            <button class="login">${I.user}<span>登录</span>${caret}</button>
            <button class="exch" aria-label="Exchange">${I.exchange}</button>
            <button class="net" aria-label="A360">${I.a360}${caret}</button>
            <button class="help" aria-label="帮助">${I.help}${caret}</button>
          </div>
          <div class="win"><button aria-label="最小化"></button><span class="max"></span></div>
        </header>

        <div class="rec">
          <button class="menu" aria-label="菜单">${I.burger}</button>
          <button class="pin" aria-label="固定">${I.pin}</button>
          <span class="size">1920x1080</span>
          <span class="name">视频录制 - 开始</span>
          <button class="go">REC</button>
          <button class="tool" aria-label="截图">${I.camera}</button>
          <button class="tool line" aria-label="绘制">${I.pencil}</button>
          <button class="tool line" aria-label="关闭">${I.close}</button>
        </div>
        <span class="cursor">${I.pointer}</span>

        <nav class="menubar">
          <button class="cut">文件(F)</button>
          ${MENUS.map((m) => html`<button>${m}</button>`)}
        </nav>
        <nav class="tabs">
          <span class="cut"></span>
          ${TABS.map((t) => html`<button class=${classMap({ latin: /^[A-Z]/.test(t) })}>${t}</button>`)}
          <button class="toggle" aria-label="最小化功能区"><span class="pill"></span>${caret}</button>
        </nav>

        <section class="ribbon">
          <div class="group g-draw">
            <div class="body">
              <span class="cut">线</span>
              ${this.big(I.circle, "圆", "b1")}${this.big(I.arc, "圆弧", "b2")}
              <div class="rows">
                ${[I.rect, I.ellipse, I.hatch].map((i) => html`${this.small(i)}${this.drop()}`)}
              </div>
            </div>
            ${this.foot()}
          </div>
          <div class="group g-mod">
            <div class="body"><div class="rows">
              ${this.small(I.move, "移动")}${this.small(I.rotate, "旋转")}${this.small(I.trim, "修剪")}${this.drop()}${this.small(I.brush)}
              ${this.small(I.copy, "复制")}${this.small(I.mirror, "镜像")}${this.small(I.fillet, "圆角")}${this.drop()}${this.small(I.explode)}
              ${this.small(I.stretch, "拉伸")}${this.small(I.scale, "缩放")}${this.small(I.array, "阵列")}${this.drop()}${this.small(I.offset)}
            </div></div>
            ${this.foot()}
          </div>
          <div class="group g-ann">
            <div class="body">
              ${this.big(I.letterA, "文字", "b1")}${this.big(I.dimension, "标注", "b2", false)}
              <div class="rows">
                ${this.small(I.linear, "线性")}${this.drop()}
                ${this.small(I.leader, "引线")}${this.drop()}
                ${this.small(I.table, "表格")}
              </div>
            </div>
            ${this.foot()}
          </div>
          <div class="group g-blk">
            <div class="body">
              ${this.big(I.insert, "插入", "b1")}
              <div class="rows">
                ${this.small(I.create, "创建")}<span></span>
                ${this.small(I.blockEdit, "编辑")}<span></span>
                ${this.small(I.attr, "编辑属性")}${this.drop()}
              </div>
            </div>
            ${this.foot()}
          </div>
          <div class="group g-lay">
            <div class="body">
              ${this.big(I.layerProps, "图层特性", "b1", false)}
              <div class="lay">
                <label class="combo">${I.bulb}${I.sun}${I.unlock}${I.red}<select aria-label="图层"><option>标注层</option></select><span class="caret big"></span></label>
                <div class="line">${[I.l1, I.l2, I.l3, I.l4].map((i) => this.small(i))}${this.small(I.l5, "置为当前")}</div>
                <div class="line">${[I.l6, I.l7, I.l8, I.l9].map((i) => this.small(i))}${this.small(I.l10, "匹配图层")}</div>
              </div>
            </div>
            ${this.foot()}
          </div>
          <div class="group g-prop">
            <div class="body">
              ${this.big(I.match, "特性匹配", "b1", false)}
              <div class="rows">
                ${I.wheel}<label class="combo red">${I.redFrame}<select aria-label="颜色"><option>ByLayer</option></select><span class="caret big"></span></label>
                ${I.weights}<label class="combo ln"><span class="rule"></span><select aria-label="线宽"><option>ByLayer</option></select><span class="caret big"></span></label>
                ${I.types}<label class="combo ln"><span class="rule"></span><select aria-label="线型"><option>ByLayer</option></select><span class="caret big"></span></label>
              </div>
            </div>
            ${this.foot(I.corner)}
          </div>
          <div class="group g-grp">
            <div class="body">
              ${this.big(I.group, "组", "b1", false)}
              <div class="rows">
                ${this.small(I.groupEdit)}${this.small(I.groupPm)}
                <button class="sel" aria-label="组选择">${I.groupSel}</button>
              </div>
            </div>
            ${this.foot()}
          </div>
          <div class="group g-util">
            <div class="body">
              ${this.big(I.measure, "测量", "b1")}
              <div class="rows">${[I.quickSel, I.cross, I.calcSm].map((i) => this.small(i))}</div>
            </div>
            ${this.foot()}
          </div>
          <div class="group g-clip">
            <div class="body">
              ${this.big(I.paste, "粘贴", "b1")}
              <div class="rows">${[I.cut, I.copyDoc].map((i) => this.small(i))}</div>
            </div>
          </div>
          <div class="group g-base">
            <div class="body">${this.big(I.base, "基点", "b1", false)}</div>
            ${this.foot()}
          </div>
        </section>

        <nav class="docs">
          <button class="doc prev" aria-label="开始"></button>
          <button class="doc cur"><span>CAD文件*</span><span class="x">✕</span></button>
          <button class="doc add" aria-label="新图形">${ic(10, 10, svg`<path d="M5 0v10M0 5h10" stroke="#c9c9c9" stroke-width="2.500"/>`)}</button>
        </nav>
        <div class="strip"></div>

        <main class="canvas">
          <div class="viewname cut">框</div>
          ${drawing}
          <div class="cube">
            <svg width="140" height="150" viewBox="0 0 140 150" aria-hidden="true"><circle cx="70" cy="72" r="54" fill="none" stroke="#41454f" stroke-width="12"/></svg>
            <span class="n">北</span><span class="w">西</span><span class="s">南</span>
            <button class="face"><span>上</span></button>
            <button class="wcs">WCS</button>
          </div>
          <div class="cmd">
            <div class="grip"><span class="d"></span><button aria-label="关闭">${I.xBold}</button><button class="wr" aria-label="自定义">${I.wrench}</button></div>
            <button class="ask" aria-label="最近使用的命令">${I.prompt}${caret}</button>
            <input aria-label="命令" placeholder="键入命令" />
            <button class="up" aria-label="历史"></button>
          </div>
          <div class="ime"><span class="logo">${I.sogou(42)}</span><div class="bar"><span>中</span>${I.moon}${I.punct}${I.smile}</div></div>
        </main>

        <section class="status">
          <button class="layout cur"><span class="cut">布局1</span></button>
          <button class="layout add" aria-label="新建布局">${ic(10, 10, svg`<path d="M5 0v10M0 5h10" stroke="#b9b9b9" stroke-width="2.500"/>`)}</button>
          <div class="modes">
            <button class="cell model">模型</button>
            <div class="cell c-grid">${I.grid}${I.dots}<span class="caret big"></span></div>
            <div class="cell c-track">${I.ortho}${I.polar}<span class="caret big"></span>${I.iso}<span class="caret big"></span></div>
            <div class="cell c-snap">${I.angle}${I.osnap}<span class="caret big"></span></div>
            <div class="cell c-scale">
              ${I.scaleA("#2a7de0", svg`<circle cx="17" cy="5" r="3" fill="none" stroke="#2a7de0" stroke-width="1.500"/>`)}
              ${I.scaleA("#bdbdbf", svg`<path d="M18 1l-3 5h4l-3 5" fill="none" stroke="#bdbdbf" stroke-width="1.500"/>`)}
              ${I.scaleA("#bdbdbf", "")}
              <button class="ratio">1:1<span class="caret big"></span></button>
            </div>
            <div class="cell c-gear">${I.gearS}<span class="caret big"></span></div>
            <button class="cell c-one" aria-label="添加">${I.plusS}</button>
            <button class="cell c-one" aria-label="隔离对象">${I.shapes}</button>
            <button class="cell c-one" aria-label="硬件加速">${I.hw}</button>
            <button class="cell c-last" aria-label="性能">${I.graph}</button>
          </div>
        </section>

        <footer class="taskbar">
          <button class="cortana" aria-label="搜索">${ic(8, 20, svg`<circle cx="-3" cy="8" r="6.500" fill="none" stroke="#111" stroke-width="1.200"/>`)}</button>
          ${APPS.map((a) => html`<button class=${classMap({ "app-btn": true, on: !!a.on })} aria-label=${a.name}>${a.icon}</button>`)}
          <div class="tray">
            <span class="desk">桌面</span><span class="chev">»</span>
            <span class="batt">${ic(14, 28, svg`<path d="M4 1v7M10 1v7" stroke="#777" stroke-width="3.500"/><path d="M4 2v6M10 2v6" stroke="#fff" stroke-width="2"/><path d="M1 8h12v7q0 4-4 4v7H5v-7q-4 0-4-4z" fill="#fff" stroke="#777"/>`)}<span class="lvl">95%</span>${ic(3, 10, svg`<path d="M0 0h3v10H0z" fill="#fff" stroke="#777" stroke-width=".700"/>`)}</span>
            <button class="t1" aria-label="显示隐藏的图标">${ic(16, 12, svg`<path d="M1 10l7-8 7 8" fill="none" stroke="#111" stroke-width="1.400"/>`)}</button>
            <span class="t2">${ic(18, 20, svg`<path d="M2 1h14v14h-3l-1 4-4-4H2z" fill="#1b9be6" stroke="#1b9be6" stroke-linejoin="round"/><path d="M9 3v10M5 6l8 4M13 6l-8 4" stroke="#fff" stroke-width="2"/>`)}</span>
            <span class="t3">${ic(20, 14, svg`<path d="M6 2.500h12v10H5V8" fill="none" stroke="#111" stroke-width="1.200"/><path d="M8 4.500h8v6H7z" fill="#111"/><path d="M19 5v5M1 1h5v4H1zM3.500 5v8" fill="none" stroke="#111" stroke-width="1.300"/>`)}</span>
            <span class="t4">${ic(18, 18, svg`<g fill="none" stroke="#222" stroke-width="1.300"><path d="M1 16Q1 3 16 2"/><path d="M5 16Q5 7 16 6" /><path d="M9 16Q9 11 16 10"/></g><circle cx="14" cy="15" r="1.800" fill="#222"/>`)}</span>
            <span class="t5">${ic(22, 18, svg`<path d="M1 6h3l4-4v14l-4-4H1z" fill="none" stroke="#222" stroke-width="1.200"/><path d="M11 6q2 3 0 6" fill="none" stroke="#222" stroke-width="1.300"/><path d="M14 4q3 5 0 10M17 2q5 7 0 14" fill="none" stroke="#999" stroke-width="1.200"/>`)}</span>
            <span class="t6">${ic(18, 20, svg`<path d="M1 6h16v7H1zM9 1v18" fill="none" stroke="#222" stroke-width="3.600"/><path d="M1 6h16v7H1zM9 1v18" fill="none" stroke="#f4f6fa" stroke-width="1.600"/>`)}</span>
            <span class="t7">${I.sogou(22)}</span>
            <span class="clock"><span class="time">23:12</span>2022/12</span>
          </div>
        </footer>
      </div>`;
  }
}
